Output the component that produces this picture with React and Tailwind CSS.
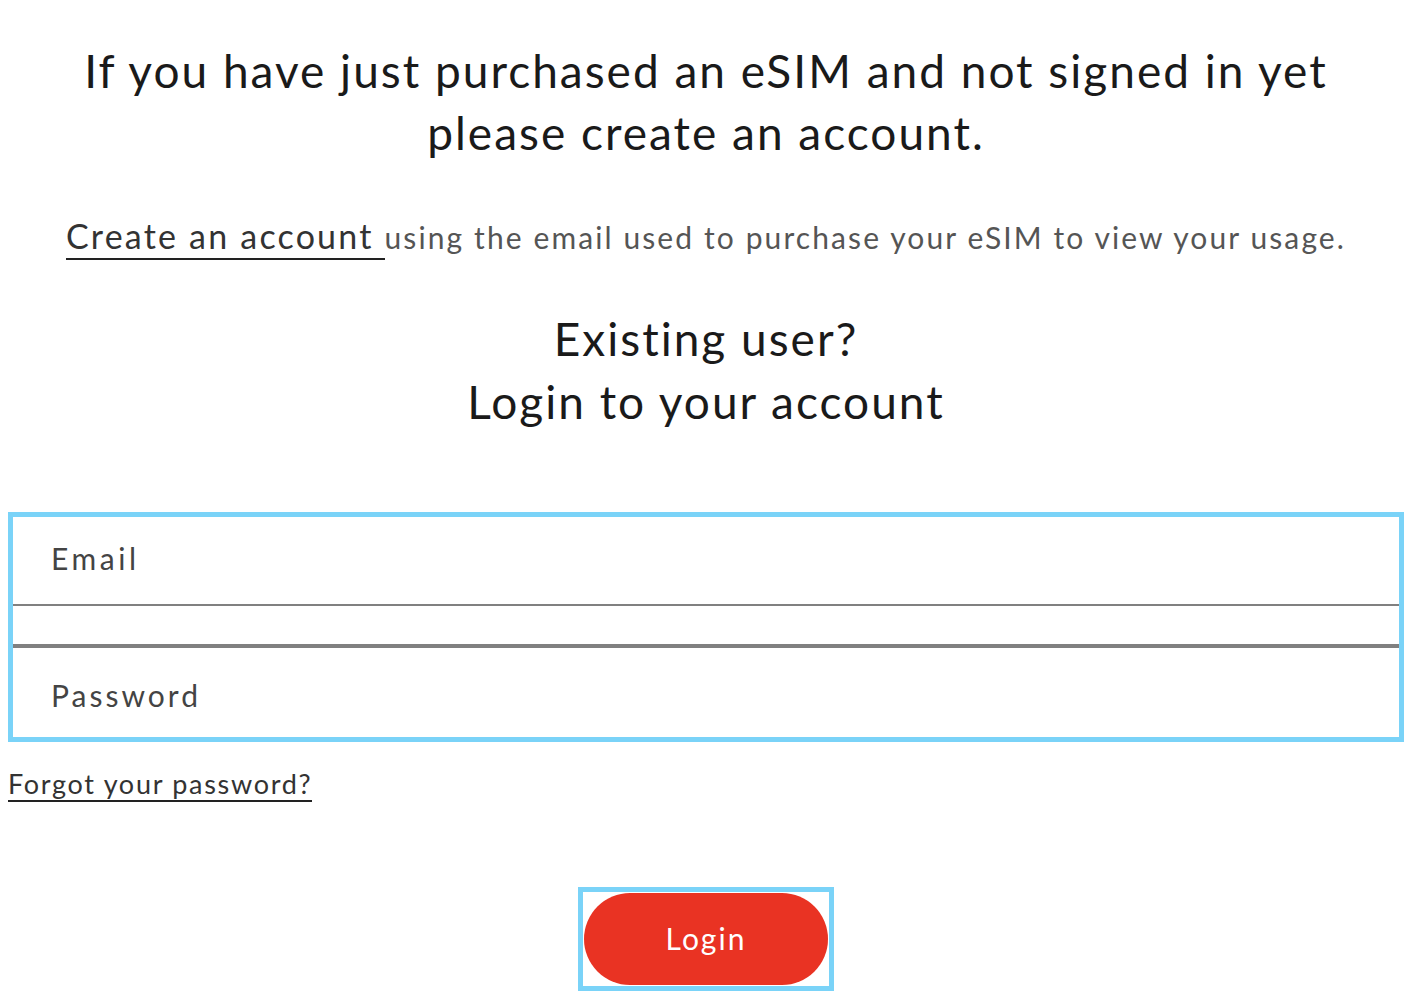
import React from "react";

const App = () => {
  return (
    <div className="min-h-screen bg-white font-['Lato',sans-serif] text-[#1a1a1a]">
      {/* Intro */}
      <h1 className="pt-[40px] text-center text-[46px] leading-[62px] tracking-[2px] font-normal">
        If you have just purchased an eSIM and not signed in yet
        <br />
        please create an account.
      </h1>

      <p className="mt-[52px] text-center text-[30px] leading-[40px] tracking-[2.1px] text-[#555]">
        <a href="#" className="text-[34px] tracking-[2.2px] text-[#333] border-b-2 border-[#222] pb-[2px]">
          Create an account{" "}
        </a>
        using the email used to purchase your eSIM to view your usage.
      </p>

      <h2 className="mt-[50px] text-center text-[46px] leading-[63px] tracking-[2px] font-normal">
        Existing user?
        <br />
        Login to your account
      </h2>

      {/* Form */}
      <form className="mt-[79px] mx-[8px]">
        <div className="border-t border-[#808080] outline-[5px] outline-[#7ad3f8] -outline-offset-[5px]">
          <div className="mx-[5px] h-[93px] border-b-2 border-[#808080] flex items-center pl-[38px]">
            <span className="text-[30px] tracking-[3.6px] text-[#444]">Email</span>
          </div>
          <div className="h-[38px]" />
          <div className="h-[98px] border-t-4 border-x-2 border-[#808080] flex items-center pl-[41px]">
            <span className="text-[30px] tracking-[3px] text-[#444]">Password</span>
          </div>
        </div>

        <div className="mt-[22px]">
          <a href="#" className="text-[27px] tracking-[1.7px] text-[#333] border-b-2 border-[#222]">
            Forgot your password?
          </a>
        </div>

        <div className="mt-[88px] flex justify-center">
          <div className="outline-[5px] outline-[#7ad3f8] outline-offset-[1px]">
            <button
              type="button"
              className="w-[244px] h-[92px] rounded-full bg-[#e93323] text-white text-[30px] tracking-[2px]"
            >
              Login
            </button>
          </div>
        </div>
      </form>
    </div>
  );
};

export default App;
